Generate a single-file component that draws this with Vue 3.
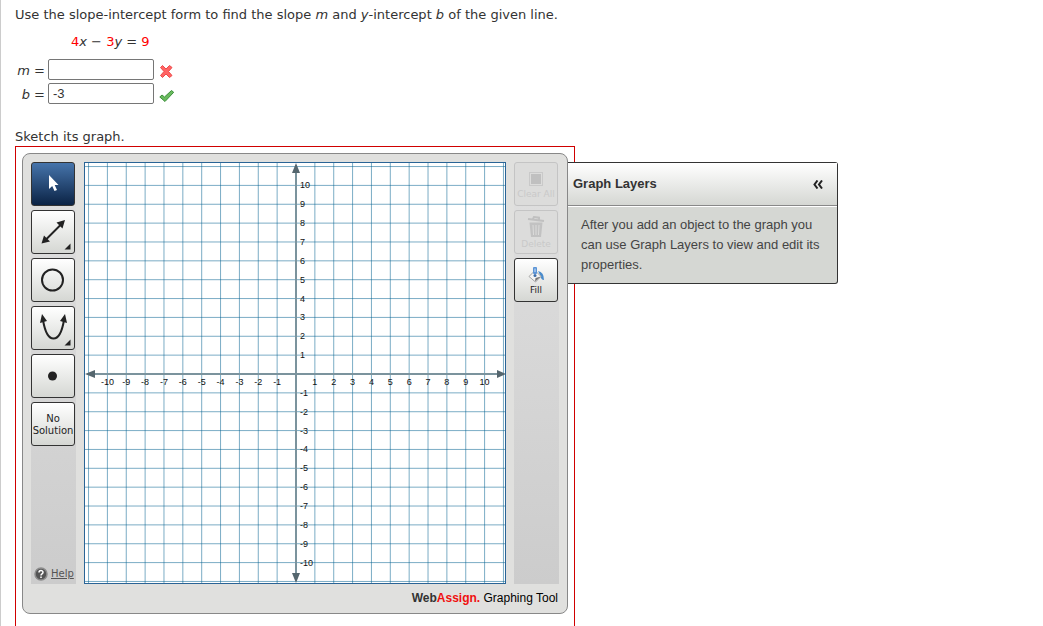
<template>
  <main class="question">
    <p class="prompt">Use the slope-intercept form to find the slope <i>m</i> and <i>y</i>-intercept <i>b</i> of the given line.</p>
    <p class="equation"><b>4</b><i>x</i> − <b>3</b><i>y</i> = <b>9</b></p>

    <div class="answer">
      <label for="slope"><i>m</i> =</label>
      <input id="slope" v-model="slope" type="text">
      <svg class="mark" viewBox="0 0 16 16" role="img" aria-label="Incorrect">
        <path d="M1.500 3.500 L3.500 1.500 L7 5 L10.500 1.500 L13 3.500 L9.500 7.500 L13 11.500 L10.500 13.500 L7 10 L3.500 13.500 L1.500 11.500 L5 7.500 Z" fill="#ff6464" stroke="#ee4a4a" stroke-linejoin="round" />
      </svg>
    </div>
    <div class="answer">
      <label for="intercept"><i>b</i> =</label>
      <input id="intercept" v-model="intercept" type="text">
      <svg class="mark" viewBox="0 0 16 16" role="img" aria-label="Correct">
        <path d="M.8 9 L3 7 L5.500 9 L12.500 2.500 L14.700 4.300 L6 13.500 Z" fill="#6aba5e" stroke="#3b8f3b" stroke-linejoin="round" />
      </svg>
    </div>

    <p class="sketch">Sketch its graph.</p>

    <div class="frame">
      <section class="tool">
        <div class="work">
          <div class="column">
            <button class="active" aria-label="Select">
              <svg viewBox="0 0 42 42"><path d="M17 12 V26 L20.200 23 L22.500 28 L25 27 L22.700 22 H26.500 Z" fill="#fff" /></svg>
            </button>
            <button aria-label="Line">
              <svg viewBox="0 0 42 42">
                <path d="M14 28.500 L28.500 14" stroke="#222" stroke-width="2" />
                <path d="M33 9 L30.500 17.500 L24.500 11.500 Z M9.500 32.500 L12 24.500 L18 30.500 Z M38.500 32.500 V38.500 H32.500 Z" fill="#222" />
              </svg>
            </button>
            <button aria-label="Circle">
              <svg viewBox="0 0 42 42"><circle cx="20.500" cy="21" r="10.500" fill="none" stroke="#222" stroke-width="2" /></svg>
            </button>
            <button aria-label="Parabola">
              <svg viewBox="0 0 42 42">
                <path d="M11 13 C13 25 17 31.500 21.500 31.500 C26 31.500 30 25 32 13" fill="none" stroke="#222" stroke-width="2" />
                <path d="M10 7 L15 14 L8 16 Z M33 7 L35 16 L28 14 Z M38.500 32.500 V38.500 H32.500 Z" fill="#222" />
              </svg>
            </button>
            <button aria-label="Point">
              <svg viewBox="0 0 42 42"><circle cx="20.500" cy="21" r="4.500" fill="#222" /></svg>
            </button>
            <button class="words"><span>No<br>Solution</span></button>
            <a class="help" href="#help">
              <svg viewBox="0 0 14 14">
                <circle cx="7" cy="7" r="6" fill="#555" stroke="#8c8c8c" stroke-width="1.500" />
                <path d="M5 5.500 C5 3 9 3 9 5.300 C9 7 7 6.800 7 8.500 M7 9.500 V11" fill="none" stroke="#fff" stroke-width="1.500" />
              </svg>
              <span>Help</span>
            </a>
          </div>

          <svg class="graph" viewBox="0 0 422 422" role="img" aria-label="Coordinate plane">
            <rect x=".5" y=".5" width="421" height="421" fill="#fff" stroke="#2a6496" />
            <g stroke="#006090" stroke-opacity=".52">
              <path v-for="n in lines" :key="n" :d="gridLine(n)" />
            </g>
            <path d="M212 8 V414 M8 212 H414" stroke="#7b939d" stroke-width="2" />
            <path d="M212 1 L216 11 H208 Z M212 421 L216 411 H208 Z M1 212 L11 208 V216 Z M422 212 L413 208 V216 Z" fill="#55666e" />
            <g class="ticks">
              <text v-for="n in ticks" :key="'x' + n" :x="at(n)" y="223" text-anchor="middle">{{ n }}</text>
              <text v-for="n in ticks" :key="'y' + n" x="216" :y="at(-n) + 3">{{ n }}</text>
            </g>
          </svg>

          <div class="column">
            <button disabled>
              <svg class="small" viewBox="0 0 18 18">
                <rect x="2.500" y="2.500" width="13" height="13" fill="none" stroke="#c9c9c9" />
                <rect x="4" y="4" width="10" height="10" fill="#c0c0c0" />
              </svg>
              <span>Clear All</span>
            </button>
            <button disabled>
              <svg class="bin" viewBox="0 0 18 22">
                <path d="M1 3 L17 5 M6 3 L7 1 L12 1.700 L12 4" fill="none" stroke="#c0c0c0" stroke-width="2" />
                <path d="M2.500 6.500 H15.500 L14 21 H4 Z" fill="#c2c2c2" />
                <path d="M6 9 L6.500 19 M9 9 V19 M12 9 L11.500 19" stroke="#dcdcdb" />
              </svg>
              <span>Delete</span>
            </button>
            <button>
              <svg class="small" viewBox="0 0 18 18">
                <path d="M11 5 Q17 6 17 14 Q14 14 13.500 10 Z" fill="#4a8ccc" />
                <path d="M2 10.500 L8 4.500 L14 10.500 L8.500 16 Z" fill="#f4f4f4" stroke="#a5a5a5" />
                <path d="M8 15.500 L14 10.500 L8.500 12 Z" fill="#777" />
                <rect x="6" y="1" width="4" height="7" rx="1" fill="#5b94d6" />
                <path d="M8 2.500 V6" stroke="#cfe2f7" />
                <circle cx="8" cy="9.500" r="1.500" fill="#3e6ea8" />
              </svg>
              <span>Fill</span>
            </button>
          </div>
        </div>
        <footer><strong>Web<em>Assign.</em></strong> Graphing Tool</footer>

        <aside class="layers">
          <header>
            <h2>Graph Layers</h2>
            <button class="collapse" aria-label="Collapse" @click="open = !open">
              <svg viewBox="0 0 10 9"><path d="M4.500 .5 L1.500 4.500 L4.500 8.500 M9 .5 L6 4.500 L9 8.500" fill="none" stroke="#222" stroke-width="2" /></svg>
            </button>
          </header>
          <p v-show="open">After you add an object to the graph you can use Graph Layers to view and edit its properties.</p>
        </aside>
      </section>
    </div>
  </main>
</template>

<script setup>
import { ref } from 'vue'

const slope = ref('')
const intercept = ref('-3')
const open = ref(true)

// grid runs from -11 to 11, labels from -10 to 10 without 0
const lines = Array.from({ length: 23 }, (_, i) => i - 11).filter(n => n !== 0)
const ticks = lines.filter(n => Math.abs(n) <= 10)

// graph unit to svg coordinate
function at(n) {
  return 212 + n * 18.86
}

function gridLine(n) {
  return `M${at(n)} 1 V421 M1 ${at(n)} H421`
}
</script>

<style>
body {
  margin: 0;
  background: #fff;
}
</style>

<style scoped>
.question {
  display: flex;
  flex-direction: column;
  align-items: flex-start;
  box-sizing: border-box;
  height: 100vh;
  overflow: hidden;
  padding: 5px 0 0 14px;
  border-left: 1px solid #ccc;
  font-family: Verdana, "DejaVu Sans", sans-serif;
  font-size: 13px;
  line-height: 20px;
  color: #333;
}
p {
  margin: 0;
}
.equation {
  margin: 7px 0 7px 56px;
}
.equation b {
  font-weight: normal;
  color: #f00;
}
.answer {
  display: flex;
  align-items: center;
  height: 21px;
  margin-bottom: 3px;
}
.answer label {
  width: 30px;
  padding-top: 2px;
  margin-right: 3px;
  text-align: right;
  white-space: nowrap;
}
.answer input {
  box-sizing: border-box;
  width: 106px;
  height: 21px;
  padding: 1px 4px;
  border: 1px solid #767676;
  border-radius: 2px;
  font: 13px Arial, "Liberation Sans", sans-serif;
  color: #333;
}
.mark {
  width: 16px;
  height: 16px;
  margin: 4px 0 0 5px;
}
.sketch {
  margin: 20px 0 -1px;
}
.frame {
  flex: 1 0 auto;
  padding: 6px;
  border: 1px solid #d00000;
  border-bottom: none;
}
.tool {
  position: relative;
  padding: 8px 8px 0;
  border: 1px solid #888;
  border-radius: 8px;
  background: #e0e0de;
  font-family: Arial, "Liberation Sans", sans-serif;
}
.work {
  display: flex;
  gap: 8px;
}
.column {
  display: flex;
  flex-direction: column;
  gap: 4px;
  width: 45px;
  background: linear-gradient(#e0e0e0, #ccc);
}
.column button {
  display: flex;
  flex-direction: column;
  align-items: center;
  justify-content: center;
  box-sizing: border-box;
  width: 44px;
  height: 44px;
  padding: 2px 0 0;
  border: 1px solid #333;
  border-radius: 3px;
  background: linear-gradient(#fff, #d5d7d3);
  font: 9px/12px Verdana, "DejaVu Sans", sans-serif;
  color: #222;
}
.column button svg {
  width: 42px;
  height: 42px;
}
.column button[aria-label] {
  padding: 0;
}
.column .words {
  font-size: 10px;
}
.column button .small {
  width: 18px;
  height: 18px;
}
.column button .bin {
  width: 18px;
  height: 22px;
}
.column .active {
  background: linear-gradient(#4674ab, #0b2345);
}
.column button:disabled {
  border-color: #c4c4c4;
  background: #dcdcdb;
  color: #c9c9c9;
}
.column span {
  white-space: nowrap;
}
.help {
  display: flex;
  align-items: center;
  gap: 3px;
  margin: auto 0 3px 3px;
  font: 10px/14px Verdana, "DejaVu Sans", sans-serif;
  color: #555;
}
.help svg {
  width: 14px;
  height: 14px;
}
.graph {
  width: 422px;
  height: 422px;
}
.ticks {
  font-size: 9px;
  fill: #111;
}
footer {
  padding: 4px 1px 5px;
  font-size: 12px;
  text-align: right;
  color: #000;
}
footer strong {
  color: #333;
}
footer em {
  font-style: normal;
  color: #f01010;
}
.layers {
  position: absolute;
  top: 8px;
  left: calc(100% + 1px);
  box-sizing: border-box;
  width: 270px;
  border: 1px solid #333;
  border-left: none;
  border-radius: 0 3px 3px 0;
  background: #d5d7d3;
}
.layers header {
  display: flex;
  align-items: center;
  justify-content: space-between;
  height: 42px;
  padding: 0 14px 0 5px;
  border-bottom: 1px solid #888;
  background: linear-gradient(#fff, #d5d7d3);
}
.layers h2 {
  margin: 0;
  font-size: 13px;
}
.collapse {
  display: flex;
  padding: 0;
  border: none;
  background: none;
}
.collapse svg {
  width: 10px;
  height: 9px;
}
.layers p {
  padding: 8px 13px;
  border-top: 1px solid #fff;
  font-size: 13px;
  color: #444;
}
</style>
